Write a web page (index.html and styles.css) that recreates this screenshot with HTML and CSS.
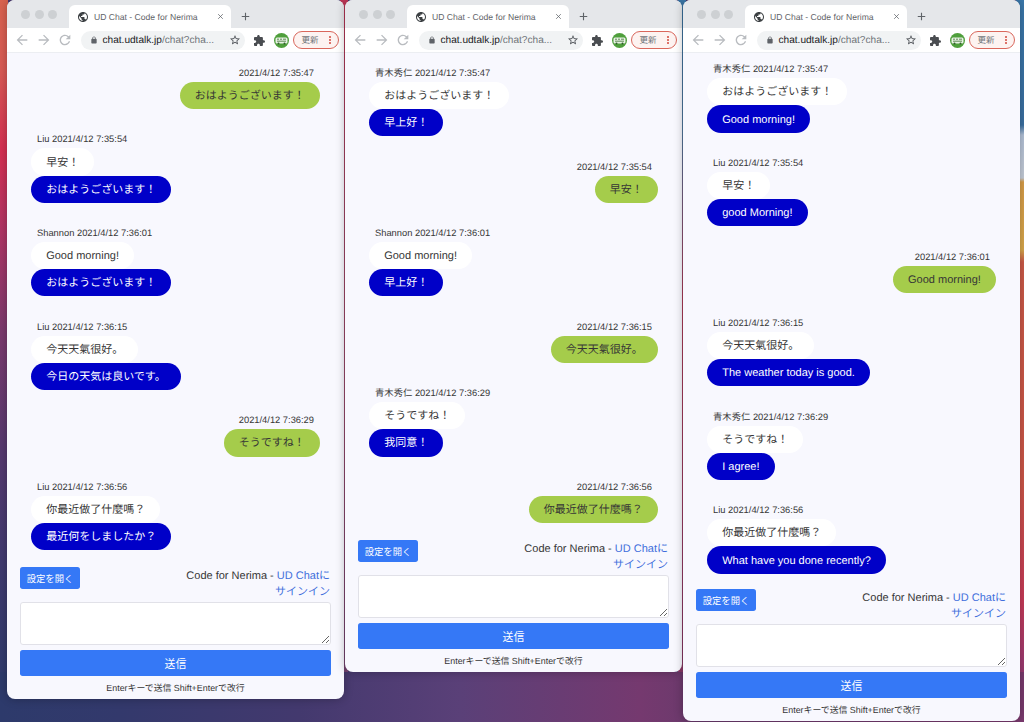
FILE: index.html
```html
<!DOCTYPE html>
<html lang="ja">
<head>
<meta charset="utf-8">
<title>UD Chat - Code for Nerima</title>
<link rel="stylesheet" href="styles.css">
</head>
<body>
<svg class="sprite" aria-hidden="true">
  <symbol id="i-globe" viewBox="2 2 20 20"><path d="M12 2C6.48 2 2 6.48 2 12s4.48 10 10 10 10-4.48 10-10S17.52 2 12 2zm-1 17.93c-3.95-.49-7-3.85-7-7.93 0-.62.08-1.21.21-1.79L9 15v1c0 1.1.9 2 2 2v1.93zm6.9-2.54c-.26-.81-1-1.39-1.9-1.39h-1v-3c0-.55-.45-1-1-1H8v-2h2c.55 0 1-.45 1-1V7h2c1.1 0 2-.9 2-2v-.41c2.93 1.19 5 4.06 5 7.41 0 2.08-.8 3.97-2.1 5.39z"/></symbol>
  <symbol id="i-close" viewBox="0 0 12 12"><path d="M2 2l8 8M10 2l-8 8" fill="none" stroke="currentColor" stroke-width="1.3"/></symbol>
  <symbol id="i-plus" viewBox="0 0 12 12"><path d="M6 1v10M1 6h10" fill="none" stroke="currentColor" stroke-width="1.5"/></symbol>
  <symbol id="i-back" viewBox="3 3 18 18"><path d="M20 11H7.83l5.59-5.59L12 4l-8 8 8 8 1.41-1.41L7.83 13H20v-2z"/></symbol>
  <symbol id="i-forward" viewBox="3 3 18 18"><path d="M4 11h12.17l-5.59-5.59L12 4l8 8-8 8-1.41-1.41L16.17 13H4v-2z"/></symbol>
  <symbol id="i-reload" viewBox="3 3 18 18"><path d="M17.65 6.35A7.958 7.958 0 0 0 12 4c-4.42 0-7.99 3.58-7.99 8s3.57 8 7.99 8c3.73 0 6.84-2.55 7.73-6h-2.08A5.99 5.99 0 0 1 12 18c-3.31 0-6-2.69-6-6s2.69-6 6-6c1.66 0 3.14.69 4.22 1.78L13 11h7V4l-2.35 2.35z"/></symbol>
  <symbol id="i-lock" viewBox="3 0 18 23"><path d="M18 8h-1V6c0-2.76-2.24-5-5-5S7 3.24 7 6v2H6c-1.1 0-2 .9-2 2v10c0 1.1.9 2 2 2h12c1.1 0 2-.9 2-2V10c0-1.1-.9-2-2-2zM9 6c0-1.66 1.34-3 3-3s3 1.34 3 3v2H9V6z"/></symbol>
  <symbol id="i-star" viewBox="2 2 20 20"><path d="M22 9.24l-7.19-.62L12 2 9.19 8.63 2 9.24l5.46 4.73L5.82 21 12 17.27 18.18 21l-1.63-7.03L22 9.24zM12 15.4l-3.76 2.27 1-4.28-3.32-2.88 4.38-.38L12 6.1l1.71 4.04 4.38.38-3.32 2.88 1 4.28L12 15.4z"/></symbol>
  <symbol id="i-puzzle" viewBox="2 1 21 21"><path d="M20.5 11H19V7c0-1.1-.9-2-2-2h-4V3.5C13 2.12 11.88 1 10.5 1S8 2.12 8 3.5V5H4c-1.1 0-1.99.9-1.99 2v3.8H3.5c1.49 0 2.7 1.21 2.7 2.7s-1.21 2.7-2.7 2.7H2V20c0 1.1.9 2 2 2h3.8v-1.5c0-1.49 1.21-2.7 2.7-2.7 1.49 0 2.7 1.21 2.7 2.7V22H17c1.1 0 2-.9 2-2v-4h1.5c1.38 0 2.5-1.12 2.5-2.5S21.88 11 20.5 11z"/></symbol>
  <symbol id="i-avatar" viewBox="0 0 15 15"><circle cx="7.5" cy="7.5" r="7.5" fill="#4f9f3c"/><rect x="1.5" y="4.5" width="12" height="6" rx="1.5" fill="#e8f2e4"/><path d="M3 6.2h2M6 6.2h2M9 6.2h3M3 8.2h9" stroke="#4f7f45" stroke-width=".9"/><circle cx="4.5" cy="10.6" r="1" fill="#2f5f2a"/><circle cx="10.5" cy="10.6" r="1" fill="#2f5f2a"/></symbol>
</svg>

<main class="desktop">

  <section class="window window-a">
    <header class="chrome">
      <div class="tabbar">
        <span class="lights"><i class="light"></i><i class="light"></i><i class="light"></i></span>
        <div class="tab">
          <svg class="ico favicon"><use href="#i-globe"/></svg>
          <span class="tab-title">UD Chat - Code for Nerima</span>
          <svg class="ico tab-close"><use href="#i-close"/></svg>
        </div>
        <svg class="ico new-tab"><use href="#i-plus"/></svg>
      </div>
      <div class="toolbar">
        <svg class="ico nav"><use href="#i-back"/></svg>
        <svg class="ico nav"><use href="#i-forward"/></svg>
        <svg class="ico nav"><use href="#i-reload"/></svg>
        <div class="omnibox">
          <svg class="ico lock"><use href="#i-lock"/></svg>
          <span class="url"><b>chat.udtalk.jp</b>/chat?cha...</span>
          <svg class="ico star"><use href="#i-star"/></svg>
        </div>
        <svg class="ico puzzle"><use href="#i-puzzle"/></svg>
        <svg class="ico avatar"><use href="#i-avatar"/></svg>
        <div class="update"><span>更新</span><i class="dots"></i></div>
      </div>
    </header>
    <div class="chat">
      <div class="messages">
        <div class="group self"><p class="meta">2021/4/12 7:35:47</p><p class="bubble green">おはようございます！</p></div>
        <div class="group"><p class="meta">Liu 2021/4/12 7:35:54</p><p class="bubble white">早安！</p><p class="bubble blue">おはようございます！</p></div>
        <div class="group"><p class="meta">Shannon 2021/4/12 7:36:01</p><p class="bubble white">Good morning!</p><p class="bubble blue">おはようございます！</p></div>
        <div class="group"><p class="meta">Liu 2021/4/12 7:36:15</p><p class="bubble white">今天天氣很好。</p><p class="bubble blue">今日の天気は良いです。</p></div>
        <div class="group self"><p class="meta">2021/4/12 7:36:29</p><p class="bubble green">そうですね！</p></div>
        <div class="group"><p class="meta">Liu 2021/4/12 7:36:56</p><p class="bubble white">你最近做了什麼嗎？</p><p class="bubble blue">最近何をしましたか？</p></div>
      </div>
      <footer class="composer">
        <div class="composer-top">
          <button class="settings">設定を開く</button>
          <p class="signin">Code for Nerima - <a href="#">UD Chatに<br>サインイン</a></p>
        </div>
        <textarea class="input"></textarea>
        <button class="send">送信</button>
        <p class="hint">Enterキーで送信 Shift+Enterで改行</p>
      </footer>
    </div>
  </section>

  <section class="window window-b">
    <header class="chrome">
      <div class="tabbar">
        <span class="lights"><i class="light"></i><i class="light"></i><i class="light"></i></span>
        <div class="tab">
          <svg class="ico favicon"><use href="#i-globe"/></svg>
          <span class="tab-title">UD Chat - Code for Nerima</span>
          <svg class="ico tab-close"><use href="#i-close"/></svg>
        </div>
        <svg class="ico new-tab"><use href="#i-plus"/></svg>
      </div>
      <div class="toolbar">
        <svg class="ico nav"><use href="#i-back"/></svg>
        <svg class="ico nav"><use href="#i-forward"/></svg>
        <svg class="ico nav"><use href="#i-reload"/></svg>
        <div class="omnibox">
          <svg class="ico lock"><use href="#i-lock"/></svg>
          <span class="url"><b>chat.udtalk.jp</b>/chat?cha...</span>
          <svg class="ico star"><use href="#i-star"/></svg>
        </div>
        <svg class="ico puzzle"><use href="#i-puzzle"/></svg>
        <svg class="ico avatar"><use href="#i-avatar"/></svg>
        <div class="update"><span>更新</span><i class="dots"></i></div>
      </div>
    </header>
    <div class="chat">
      <div class="messages">
        <div class="group"><p class="meta">青木秀仁 2021/4/12 7:35:47</p><p class="bubble white">おはようございます！</p><p class="bubble blue">早上好！</p></div>
        <div class="group self"><p class="meta">2021/4/12 7:35:54</p><p class="bubble green">早安！</p></div>
        <div class="group"><p class="meta">Shannon 2021/4/12 7:36:01</p><p class="bubble white">Good morning!</p><p class="bubble blue">早上好！</p></div>
        <div class="group self"><p class="meta">2021/4/12 7:36:15</p><p class="bubble green">今天天氣很好。</p></div>
        <div class="group"><p class="meta">青木秀仁 2021/4/12 7:36:29</p><p class="bubble white">そうですね！</p><p class="bubble blue">我同意！</p></div>
        <div class="group self"><p class="meta">2021/4/12 7:36:56</p><p class="bubble green">你最近做了什麼嗎？</p></div>
      </div>
      <footer class="composer">
        <div class="composer-top">
          <button class="settings">設定を開く</button>
          <p class="signin">Code for Nerima - <a href="#">UD Chatに<br>サインイン</a></p>
        </div>
        <textarea class="input"></textarea>
        <button class="send">送信</button>
        <p class="hint">Enterキーで送信 Shift+Enterで改行</p>
      </footer>
    </div>
  </section>

  <section class="window window-c">
    <header class="chrome">
      <div class="tabbar">
        <span class="lights"><i class="light"></i><i class="light"></i><i class="light"></i></span>
        <div class="tab">
          <svg class="ico favicon"><use href="#i-globe"/></svg>
          <span class="tab-title">UD Chat - Code for Nerima</span>
          <svg class="ico tab-close"><use href="#i-close"/></svg>
        </div>
        <svg class="ico new-tab"><use href="#i-plus"/></svg>
      </div>
      <div class="toolbar">
        <svg class="ico nav"><use href="#i-back"/></svg>
        <svg class="ico nav"><use href="#i-forward"/></svg>
        <svg class="ico nav"><use href="#i-reload"/></svg>
        <div class="omnibox">
          <svg class="ico lock"><use href="#i-lock"/></svg>
          <span class="url"><b>chat.udtalk.jp</b>/chat?cha...</span>
          <svg class="ico star"><use href="#i-star"/></svg>
        </div>
        <svg class="ico puzzle"><use href="#i-puzzle"/></svg>
        <svg class="ico avatar"><use href="#i-avatar"/></svg>
        <div class="update"><span>更新</span><i class="dots"></i></div>
      </div>
    </header>
    <div class="chat">
      <div class="messages">
        <div class="group"><p class="meta">青木秀仁 2021/4/12 7:35:47</p><p class="bubble white">おはようございます！</p><p class="bubble blue">Good morning!</p></div>
        <div class="group"><p class="meta">Liu 2021/4/12 7:35:54</p><p class="bubble white">早安！</p><p class="bubble blue">good Morning!</p></div>
        <div class="group self"><p class="meta">2021/4/12 7:36:01</p><p class="bubble green">Good morning!</p></div>
        <div class="group"><p class="meta">Liu 2021/4/12 7:36:15</p><p class="bubble white">今天天氣很好。</p><p class="bubble blue">The weather today is good.</p></div>
        <div class="group"><p class="meta">青木秀仁 2021/4/12 7:36:29</p><p class="bubble white">そうですね！</p><p class="bubble blue">I agree!</p></div>
        <div class="group"><p class="meta">Liu 2021/4/12 7:36:56</p><p class="bubble white">你最近做了什麼嗎？</p><p class="bubble blue">What have you done recently?</p></div>
      </div>
      <footer class="composer">
        <div class="composer-top">
          <button class="settings">設定を開く</button>
          <p class="signin">Code for Nerima - <a href="#">UD Chatに<br>サインイン</a></p>
        </div>
        <textarea class="input"></textarea>
        <button class="send">送信</button>
        <p class="hint">Enterキーで送信 Shift+Enterで改行</p>
      </footer>
    </div>
  </section>

</main>
</body>
</html>
```

FILE: styles.css
```css
* { box-sizing: border-box; }

html, body {
  margin: 0;
  height: 100%;
  overflow: hidden;
}

body {
  font-family: "Liberation Sans", "Noto Sans CJK JP", sans-serif;
  color: #363636;
  text-rendering: geometricPrecision;
}

.sprite { display: none; }

.desktop {
  position: relative;
  width: 1024px;
  height: 722px;
  background-color: #4a3a70;
  background-repeat: no-repeat;
  background-image:
    linear-gradient(90deg, #2d3a6b 0, #33396c 120px, #43396e 300px, #5a4078 460px, #75396f 640px, #6a3a6c 700px, #7a3a6e 1024px),
    linear-gradient(180deg, #d9634f 0, #d95a55 70px, #d62f52 150px, #b03565 230px, #7c3a6e 330px, #56396f 450px, #3f3a6f 570px, #2d3a6b 700px),
    linear-gradient(180deg, #c93a5c 0, #b44a6e 200px, #a85075 400px, #7c4878 672px),
    linear-gradient(180deg, #3f7db0 0, #5a86b0 130px, #c04060 300px, #a8406e 550px, #8a3a6c 722px),
    linear-gradient(180deg, #3a78ab 0, #3a70a2 125px, #b3c2d8 135px, #c6cdd8 178px, #d99e48 182px, #d9a84c 250px, #cc5a48 262px, #cc5648 480px, #c83a58 600px, #a03a70 660px, #7a3a6e 722px);
  background-size: 100% 50px, 8px 100%, 8px 100%, 8px 100%, 8px 100%;
  background-position: 0 100%, 0 0, 340px 0, 678px 0, 1016px 0;
}

/* windows sit on a free desktop canvas */
.window {
  position: absolute;
  top: 0;
  width: 337px;
  display: flex;
  flex-direction: column;
  background: #f8f8fe;
  border-radius: 8px;
  overflow: hidden;
  box-shadow: 0 0 10px rgba(0, 0, 0, .28);
}
.window-a { left: 7px; height: 699px; }
.window-b { left: 345px; height: 672px; }
.window-c { left: 683px; height: 721px; }

/* browser chrome */
.chrome { flex: none; border-bottom: 1px solid #eceef2; }

.tabbar {
  height: 28px;
  display: flex;
  align-items: flex-end;
  background: #e5e7ea;
  padding-left: 14px;
}
.lights {
  align-self: flex-start;
  margin-top: 10px;
  display: flex;
  gap: 4.5px;
}
.light {
  width: 9px;
  height: 9px;
  border-radius: 50%;
  background: #cdd0d3;
}
.ico { display: block; fill: currentColor; }

.tab {
  margin-left: 12px;
  width: 162px;
  height: 23px;
  background: #fff;
  border-radius: 6px 6px 0 0;
  display: flex;
  align-items: center;
  padding: 0 7px 0 9px;
  color: #5f6368;
}
.favicon { width: 10px; height: 10px; color: #3c4043; flex: none; }
.tab-title {
  margin-left: 6px;
  font-size: 8.6px;
  white-space: nowrap;
  flex: 1;
}
.tab-close { width: 7px; height: 7px; color: #5f6368; flex: none; }
.new-tab {
  width: 9px;
  height: 9px;
  margin: 0 0 7px 10px;
  color: #5f6368;
}

.toolbar {
  height: 24px;
  display: flex;
  align-items: center;
  background: #fff;
  padding-left: 9px;
}
.nav { width: 12px; height: 12px; color: #b9bcc0; margin-right: 9.5px; flex: none; }
.omnibox {
  width: 164px;
  height: 19px;
  border-radius: 10px;
  background: #f1f3f4;
  display: flex;
  align-items: center;
  padding: 0 5px 0 10px;
}
.lock { width: 6px; height: 8px; color: #5f6368; flex: none; }
.url {
  margin-left: 6px;
  flex: 1;
  font-size: 10.1px;
  color: #70757a;
  white-space: nowrap;
}
.url b { font-weight: 400; color: #202124; }
.star { width: 10px; height: 10px; color: #4d5156; flex: none; }
.puzzle { width: 11px; height: 11px; color: #4a4d51; margin-left: 9px; flex: none; }
.avatar { width: 15px; height: 15px; margin-left: 9px; flex: none; }
.update {
  margin-left: 4px;
  width: 46px;
  height: 18px;
  border: 1px solid #d9675c;
  border-radius: 9px;
  background: #fdf3f1;
  display: flex;
  align-items: center;
  padding-left: 8px;
  font-size: 8.5px;
  color: #70757a;
}
.dots {
  margin-left: 10px;
  width: 2px;
  height: 2px;
  border-radius: 50%;
  background: #d2483c;
  box-shadow: 0 -3px 0 #d2483c, 0 3px 0 #d2483c;
}

/* chat */
.chat {
  flex: 1;
  min-height: 0;
  display: flex;
  flex-direction: column;
}
.messages {
  flex: 1;
  min-height: 0;
  padding: 13px 24px 0;
  display: flex;
  flex-direction: column;
  gap: 23.25px;
}
.window-c .messages { padding-top: 9.3px; }

.group { display: flex; flex-direction: column; align-items: flex-start; }
.group.self { align-items: flex-end; }

.meta {
  margin: 0 6px 2px;
  font-size: 9.33px;
  line-height: 14px;
  white-space: nowrap;
}
.bubble {
  margin: 0;
  padding: 6.1px 15.2px 5.1px;
  border-radius: 14px;
  font-size: 11px;
  line-height: 16px;
  white-space: nowrap;
}
.green { background: #a5cc4b; color: #363636; }
.white { background: #fff; color: #363636; }
.blue { background: #0000c8; color: #fff; }

/* composer */
.composer {
  flex: none;
  padding: 0 13px 4px;
  display: flex;
  flex-direction: column;
}
.composer-top {
  display: flex;
  justify-content: space-between;
  align-items: flex-start;
}
.settings {
  width: 60px;
  height: 22px;
  padding: 0;
  border: 0;
  border-radius: 2.7px;
  background: #3578f6;
  color: #fff;
  font: inherit;
  font-size: 9.33px;
}
.signin {
  margin: 0 1px 0 0;
  padding-top: 1px;
  text-align: right;
  font-size: 11px;
  line-height: 16px;
}
.signin a { color: #3f6fdc; text-decoration: none; }
.input {
  display: block;
  margin-top: 2px;
  width: 100%;
  height: 43px;
  border: 1px solid #e1e1e8;
  border-radius: 3px;
  background: #fff;
  outline: 0;
}
.send {
  margin-top: 5px;
  width: 100%;
  height: 26px;
  padding: 0;
  border: 0;
  border-radius: 2.7px;
  background: #3578f6;
  color: #fff;
  font: inherit;
  font-size: 10.9px;
}
.hint {
  margin: 5px 0 0;
  text-align: center;
  font-size: 8.9px;
  line-height: 14px;
}
```
